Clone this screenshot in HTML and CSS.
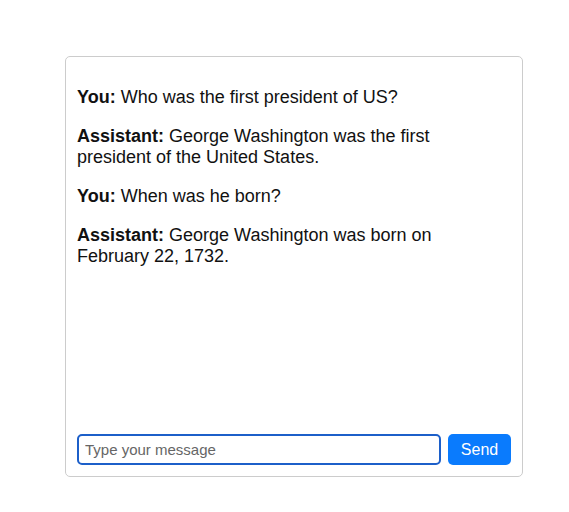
FILE: index.html
```html
<!DOCTYPE html>
<html lang="en">
<head>
    <meta charset="UTF-8">
    <meta name="viewport" content="width=device-width, initial-scale=1.0">
    <title>Chat</title>
    <link rel="stylesheet" href="styles.css">
</head>
<body>
    <div class="chat-container">
        <div class="chat-log" id="chat-log">
            <p><strong>You:</strong> Who was the first president of US?</p>
            <p><strong>Assistant:</strong> George Washington was the first president of the United States.</p>
            <p><strong>You:</strong> When was he born?</p>
            <p><strong>Assistant:</strong> George Washington was born on February 22, 1732.</p>
        </div>
        <form class="chat-form" id="chat-form">
            <input type="text" class="chat-input" placeholder="Type your message">
            <button type="submit" class="send-btn">Send</button>
        </form>
    </div>
</body>
</html>
```

FILE: styles.css
```css
* {
    box-sizing: border-box;
}

body {
    margin: 0;
    padding: 56px 0 0 65px;
    font-family: "Liberation Sans", Arial, Helvetica, sans-serif;
    color: #111;
    background: #fff;
}

.chat-container {
    width: 458px;
    height: 421px;
    border: 1px solid #ccc;
    border-radius: 5px;
    padding: 12px 11px 11px 11px;
    display: flex;
    flex-direction: column;
}

.chat-log {
    flex: 1;
    overflow-y: auto;
    padding-right: 40px;
}

.chat-log p {
    margin: 18px 0;
    font-size: 18px;
    line-height: 21px;
}

.chat-form {
    display: flex;
    gap: 7px;
}

.chat-input {
    flex: 1;
    height: 31px;
    padding: 4px 6px;
    font-family: inherit;
    font-size: 15px;
    color: #333;
    border: 2px solid #1c5fc9;
    border-radius: 5px;
    outline: none;
}

.chat-input::placeholder {
    color: #666;
}

.send-btn {
    width: 63px;
    height: 31px;
    background: #0a7bfd;
    color: #fff;
    border: none;
    border-radius: 5px;
    font-family: inherit;
    font-size: 16px;
    cursor: pointer;
}
```
